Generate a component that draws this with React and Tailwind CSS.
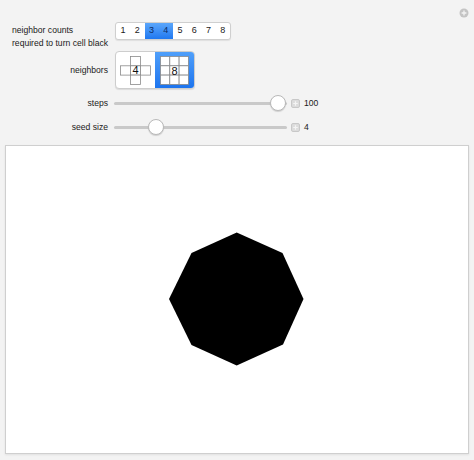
import React from "react";

const font = { fontFamily: '"Liberation Sans", Arial, sans-serif' };

function BoxPlus() {
  return (
    <svg width="9" height="9" viewBox="0 0 9 9" className="shrink-0">
      <rect x="0.5" y="0.5" width="8" height="8" rx="1.5" fill="#dcdcdc" stroke="#c8c8c8" />
      <path d="M4.5 2.2V6.8M2.2 4.5H6.8" stroke="#f4f4f4" strokeWidth="1.2" />
    </svg>
  );
}

function Slider({ pct }) {
  return (
    <div className="relative h-[16px] w-[173px] flex items-center">
      <div className="h-[3px] w-full rounded-full bg-[#c9c9c9]" />
      <div
        className="absolute top-[0px] h-[16px] w-[16px] rounded-full bg-white border border-[#b9b9b9] shadow-[0_1px_1px_rgba(0,0,0,0.15)]"
        style={{ left: `calc(${pct}% - 8px)` }}
      />
    </div>
  );
}

export default function App() {
  const nums = [1, 2, 3, 4, 5, 6, 7, 8];
  return (
    <div className="relative w-[474px] h-[460px] bg-[#f3f3f3] text-[#1a1a1a]" style={font}>
      <svg className="absolute left-[459px] top-[8px]" width="10" height="10" viewBox="0 0 10 10">
        <circle cx="5" cy="5" r="4.5" fill="#c4c4c4" />
        <path d="M5 2.6V7.4M2.6 5H7.4" stroke="#f3f3f3" strokeWidth="1.3" />
      </svg>

      <div className="flex flex-col pt-[22px] pl-[12px]">
        {/* row 1 */}
        <div className="flex items-start">
          <div className="w-[103px] pt-[2px] text-[8.6px] leading-[13px]">
            <div>neighbor counts</div>
            <div>required to turn cell black</div>
          </div>
          <div className="flex h-[18px] w-[116px] rounded-[3px] border border-[#cfcfcf] bg-white text-[9px] overflow-hidden shadow-[0_1px_1px_rgba(0,0,0,0.08)]">
            {nums.map((n) => {
              const on = n === 3 || n === 4;
              return (
                <div
                  key={n}
                  className={
                    "flex-1 flex items-center justify-center " +
                    (on ? "bg-gradient-to-b from-[#5aa6fb] to-[#1f78f0] text-[#0b2d66]" : "")
                  }
                >
                  {n}
                </div>
              );
            })}
          </div>
        </div>

        {/* row 2 */}
        <div className="flex items-center mt-[1px]">
          <div className="w-[103px] pr-[7px] text-right text-[8.6px]">neighbors</div>
          <div className="flex h-[38px] w-[80px] rounded-[4px] border border-[#cdcdcd] overflow-hidden bg-white shadow-[0_1px_1px_rgba(0,0,0,0.1)]">
            <div className="w-[40px] h-full flex items-center justify-center">
              <svg width="31" height="29" viewBox="0 0 31 29">
                <g fill="#ffffff" stroke="#8a8a8a" strokeWidth="0.8">
                  <rect x="10.5" y="0.5" width="10" height="9.3" />
                  <rect x="0.5" y="9.8" width="10" height="9.3" />
                  <rect x="10.5" y="9.8" width="10" height="9.3" />
                  <rect x="20.5" y="9.8" width="10" height="9.3" />
                  <rect x="10.5" y="19.1" width="10" height="9.3" />
                </g>
                <text x="15.5" y="18.3" textAnchor="middle" fontSize="11" fill="#111" style={font}>4</text>
              </svg>
            </div>
            <div className="w-[40px] h-full flex items-center justify-center bg-gradient-to-b from-[#4f9ffa] to-[#1c74ee]">
              <svg width="29" height="29" viewBox="0 0 29 29">
                <g fill="#ffffff" stroke="#8a8a8a" strokeWidth="0.8">
                  {[0, 1, 2].map((r) =>
                    [0, 1, 2].map((c) => (
                      <rect key={r + "-" + c} x={0.5 + c * 9.3} y={0.5 + r * 9.3} width="9.3" height="9.3" />
                    ))
                  )}
                </g>
                <text x="14.5" y="18.5" textAnchor="middle" fontSize="11" fill="#111" style={font}>8</text>
              </svg>
            </div>
          </div>
        </div>

        {/* row 3 */}
        <div className="flex items-center mt-[6px] h-[16px]">
          <div className="w-[102px] pr-[6px] text-right text-[8.6px]">steps</div>
          <Slider pct={95} />
          <div className="ml-[4px]"><BoxPlus /></div>
          <div className="ml-[4px] text-[8.6px]">100</div>
        </div>

        {/* row 4 */}
        <div className="flex items-center mt-[8px] h-[16px]">
          <div className="w-[102px] pr-[6px] text-right text-[8.6px]">seed size</div>
          <Slider pct={24} />
          <div className="ml-[4px]"><BoxPlus /></div>
          <div className="ml-[4px] text-[8.6px]">4</div>
        </div>
      </div>

      {/* plot */}
      <div className="absolute left-[5px] top-[145px] w-[464px] h-[309px] bg-white border border-[#cfcfcf] shadow-[0_1px_2px_rgba(0,0,0,0.08)]">
        <svg width="462" height="307" viewBox="6 146 462 307" className="block">
          <polygon
            points="236.7,232.5 282.5,253 303.5,299 283,344.5 236.7,365.5 191.5,345 169,299 191.5,253"
            fill="#000"
          />
        </svg>
      </div>
    </div>
  );
}
